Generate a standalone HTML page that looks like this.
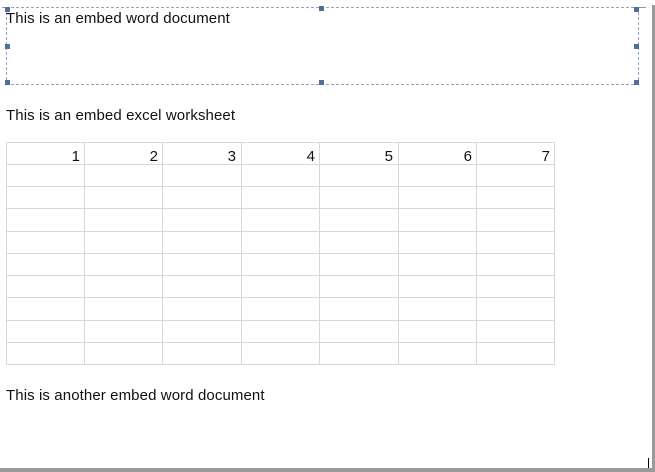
<!DOCTYPE html>
<html><head><style>
body{margin:0;width:655px;height:472px;background:#fff;position:relative;overflow:hidden;font-family:"Liberation Sans",sans-serif;font-size:15px;color:#111}
.a{position:absolute}
.t{position:absolute;left:6px;white-space:nowrap;letter-spacing:0.1px}
.h{position:absolute;width:5px;height:5px;background:#4f6f9a}
.v{position:absolute;width:1px;background:#d8d8d8;top:142px;height:222px}
.r{position:absolute;height:1px;background:#d8d8d8;left:6px;width:549px}
.n{position:absolute;top:148px;width:70px;text-align:right}
</style></head><body>
<div class="a" style="left:6px;top:7px;width:631px;height:76px;border:1px dashed #8fa5c2"></div>
<div class="a" style="left:2px;top:7px;width:8px;height:1px;background:#999"></div>
<div class="a" style="left:638px;top:7px;width:8px;height:1px;background:#999"></div>
<div class="h" style="left:5px;top:7px"></div>
<div class="h" style="left:319px;top:6px"></div>
<div class="h" style="left:634px;top:7px"></div>
<div class="h" style="left:5px;top:44px"></div>
<div class="h" style="left:634px;top:44px"></div>
<div class="h" style="left:5px;top:80px"></div>
<div class="h" style="left:319px;top:80px"></div>
<div class="h" style="left:634px;top:80px"></div>
<div class="t" style="top:10px">This is an embed word document</div>
<div class="t" style="top:107px">This is an embed excel worksheet</div>
<div class="t" style="top:387px">This is another embed word document</div>
<div class="v" style="left:6px"></div><div class="v" style="left:84px"></div><div class="v" style="left:162px"></div><div class="v" style="left:241px"></div><div class="v" style="left:319px"></div><div class="v" style="left:398px"></div><div class="v" style="left:476px"></div><div class="v" style="left:554px"></div>
<div class="r" style="top:142px"></div><div class="r" style="top:164px"></div><div class="r" style="top:186px"></div><div class="r" style="top:208px"></div><div class="r" style="top:231px"></div><div class="r" style="top:253px"></div><div class="r" style="top:275px"></div><div class="r" style="top:297px"></div><div class="r" style="top:320px"></div><div class="r" style="top:342px"></div><div class="r" style="top:364px"></div>
<div class="n" style="left:10px">1</div><div class="n" style="left:88px">2</div><div class="n" style="left:166px">3</div><div class="n" style="left:245px">4</div><div class="n" style="left:323px">5</div><div class="n" style="left:402px">6</div><div class="n" style="left:480px">7</div>
<div class="a" style="left:648px;top:458px;width:1px;height:10px;background:#000"></div>
<div class="a" style="left:652px;top:5px;width:3px;height:467px;background:#9a9a9a"></div>
<div class="a" style="left:0;top:468px;width:655px;height:4px;background:#9a9a9a"></div>
</body></html>
